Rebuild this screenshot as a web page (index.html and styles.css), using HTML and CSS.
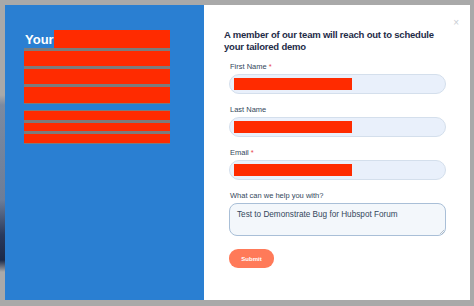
FILE: index.html
```html
<!DOCTYPE html>
<html lang="en">
<head>
<meta charset="utf-8">
<title>Demo request</title>
<link rel="stylesheet" href="styles.css">
</head>
<body>
<div class="page">
  <div class="modal">
    <div class="left">
      <div class="title-row">
        <span class="your">Your</span>
        <span class="redact r1"></span>
      </div>
      <div class="group g1">
        <span class="redact r2"></span>
        <span class="redact r3"></span>
        <span class="redact r4"></span>
      </div>
      <div class="group g2">
        <span class="redact r5"></span>
        <span class="redact r6"></span>
        <span class="redact r7"></span>
      </div>
    </div>
    <div class="right">
      <button class="close" type="button" aria-label="Close">×</button>
      <h2 class="heading">A member of our team will reach out to schedule your tailored demo</h2>
      <form class="form">
        <div class="field">
          <label class="label">First Name <span class="req">*</span></label>
          <div class="input"><span class="fill"></span></div>
        </div>
        <div class="field">
          <label class="label">Last Name</label>
          <div class="input"><span class="fill"></span></div>
        </div>
        <div class="field">
          <label class="label">Email <span class="req">*</span></label>
          <div class="input"><span class="fill"></span></div>
        </div>
        <div class="field">
          <label class="label">What can we help you with?</label>
          <div class="textarea">Test to Demonstrate Bug for Hubspot Forum
            <svg class="grip" width="5" height="5" viewBox="0 0 5 5"><path d="M5 1 L1 5 M5 3 L3 5" stroke="#9aa8b8" stroke-width="0.7"/></svg>
          </div>
        </div>
        <button class="submit" type="button">Submit</button>
      </form>
    </div>
  </div>
</div>
</body>
</html>
```
FILE: styles.css
```css
* { box-sizing: border-box; }
html, body { margin: 0; padding: 0; }
body {
  width: 474px;
  height: 306px;
  overflow: hidden;
  font-family: "Liberation Sans", Arial, sans-serif;
}
.page {
  width: 474px;
  height: 306px;
  padding: 5px 4px 6px 5px;
  background:
    linear-gradient(to bottom, #a9a9a9 0, #a9a9a9 95px, #7c8aa0 105px, #6c7d98 200px, #2a3a5c 235px, #1c2a48 260px, #a9a9a9 272px) no-repeat 0 0 / 5px 306px,
    #a9a9a9;
}
.modal {
  display: flex;
  width: 465px;
  height: 295px;
}
.left {
  width: 199px;
  background: #2a7fd2;
  padding: 25px 0 0 19px;
}
.title-row {
  display: flex;
  align-items: flex-end;
  height: 18px;
}
.your {
  color: #fff;
  font-weight: bold;
  font-size: 13px;
  line-height: 15px;
  width: 30px;
  padding-left: 1px;
  padding-bottom: 1px;
}
.redact {
  display: block;
  background: #ff2b00;
}
.r1 { width: 116px; height: 18px; }
.group {
  width: 146px;
  background: #7c7c7c;
  display: flex;
  flex-direction: column;
  gap: 3px;
}
.g1 { padding: 3px 0 1px; }
.g1 .redact { height: 15px; }
.g1 .r4 { height: 16px; }
.g2 { margin-top: 6px; padding: 1px 0 1px; }
.r5 { height: 9px; }
.r6 { height: 8px; }
.r7 { height: 9px; }

.right {
  flex: 1;
  background: #fff;
  padding: 24px 24px 0 20px;
  position: relative;
}
.close {
  position: absolute;
  top: 13px;
  right: 11px;
  border: 0;
  background: none;
  padding: 0;
  font-family: "Liberation Sans", Arial, sans-serif;
  font-size: 10px;
  line-height: 10px;
  color: #c8cdd4;
}
.heading {
  margin: 0;
  font-size: 9.5px;
  letter-spacing: -0.2px;
  line-height: 12px;
  font-weight: bold;
  color: #1e2b47;
  width: 220px;
}
.form {
  margin-top: 9px;
  padding-left: 5px;
}
.field { margin-bottom: 11px; }
.label {
  display: block;
  font-size: 7.5px;
  line-height: 10px;
  color: #33475b;
  margin-bottom: 2px;
  padding-left: 1px;
}
.req { color: #e8454f; }
.input {
  height: 20px;
  border-radius: 10px;
  background: #e9f0fb;
  border: 1px solid #d4dfec;
  padding: 3px 0 0 4px;
}
.fill {
  display: block;
  width: 118px;
  height: 12px;
  background: #ff2b00;
}
.textarea {
  position: relative;
  height: 33px;
  border-radius: 8px;
  background: #f3f7fb;
  border: 1px solid #a9bfd7;
  padding: 6px 0 0 7px;
  font-size: 8.2px;
  line-height: 10px;
  color: #33475b;
}
.grip {
  position: absolute;
  right: 1px;
  bottom: 1px;
}
.field:last-of-type { margin-bottom: 13px; }
.submit {
  display: block;
  width: 45px;
  height: 19px;
  border: 0;
  border-radius: 9px;
  background: #ff7a59;
  color: #fff;
  font-family: "Liberation Sans", Arial, sans-serif;
  font-weight: bold;
  font-size: 6px;
  padding: 0;
}
```
